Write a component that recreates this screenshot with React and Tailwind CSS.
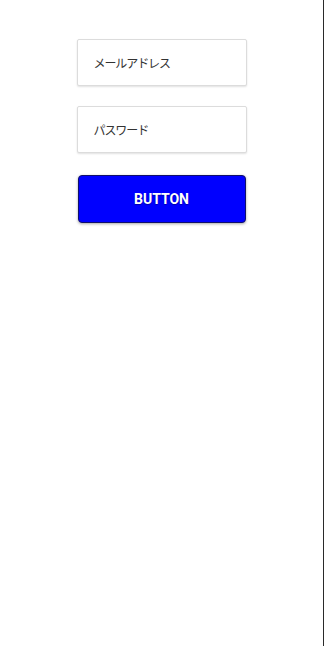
export default function App() {
  return (
    <div className="min-h-screen w-full bg-white border-r border-[#2a2a2a] font-['Noto_Sans_CJK_JP',sans-serif]">
      <div className="flex flex-col items-center pt-[39px]">
        <input
          type="email"
          placeholder="メールアドレス"
          className="w-[170px] h-[47px] px-4 text-[12px] tracking-[-0.09em] text-[#222] placeholder:text-[#333] bg-white border border-[#dcdcdc] rounded-[2px] shadow-[0_1px_2px_rgba(0,0,0,0.12)] outline-none"
        />
        <input
          type="password"
          placeholder="パスワード"
          className="mt-[20px] w-[170px] h-[47px] px-4 text-[12px] tracking-[-0.09em] text-[#222] placeholder:text-[#333] bg-white border border-[#dcdcdc] rounded-[2px] shadow-[0_1px_2px_rgba(0,0,0,0.12)] outline-none"
        />
        <button
          type="button"
          className="mt-[22px] w-[168px] h-[48px] bg-[#0000ff] border border-[#10106a] rounded-[4px] shadow-[0_1px_3px_rgba(0,0,0,0.35)] text-white text-[14px] font-bold font-['Roboto',sans-serif] [text-shadow:0_1px_1px_rgba(0,0,0,0.35)]"
        >
          BUTTON
        </button>
      </div>
    </div>
  )
}
